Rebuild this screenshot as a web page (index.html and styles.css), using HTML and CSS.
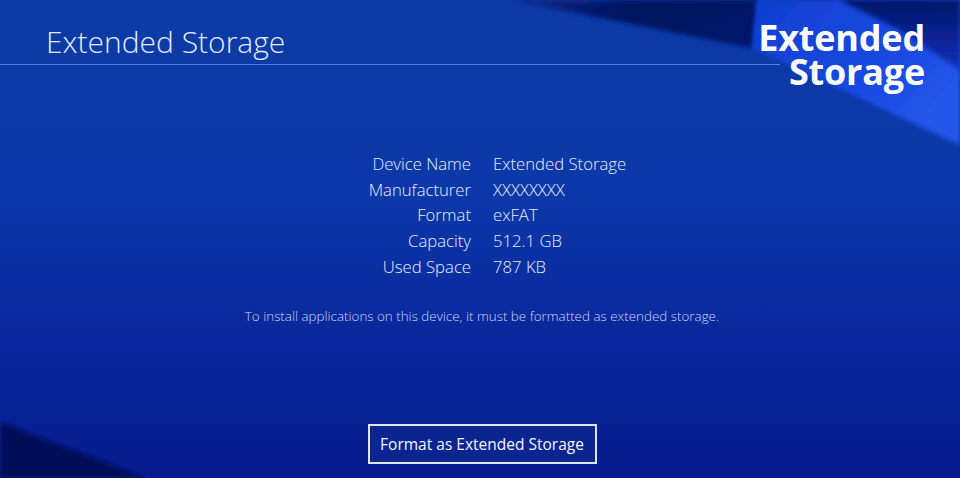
FILE: index.html
```html
<!DOCTYPE html>
<html lang="en">
<head>
    <meta charset="UTF-8">
    <meta name="viewport" content="width=device-width, initial-scale=1.0">
    <title>Extended Storage</title>
    <link rel="stylesheet" href="styles.css">
</head>
<body>
    <div class="screen">
        <!-- background waves -->
        <svg class="waves" width="960" height="478" viewBox="0 0 960 478" aria-hidden="true">
            <defs>
                <linearGradient id="darkBand" x1="0" y1="0" x2="1" y2="0.4">
                    <stop offset="0" stop-color="#0a2a8e"/>
                    <stop offset="0.5" stop-color="#04125e"/>
                    <stop offset="1" stop-color="#051468"/>
                </linearGradient>
                <linearGradient id="brightBand" x1="0" y1="0" x2="1" y2="0.6">
                    <stop offset="0" stop-color="#0f3fd0"/>
                    <stop offset="0.6" stop-color="#1848e0"/>
                    <stop offset="1" stop-color="#2455ea"/>
                </linearGradient>
                <linearGradient id="cornerDark" x1="0" y1="0" x2="0" y2="1">
                    <stop offset="0" stop-color="#03105a"/>
                    <stop offset="1" stop-color="#0b2cb4"/>
                </linearGradient>
                <filter id="soft"><feGaussianBlur stdDeviation="2"/></filter>
            </defs>
            <polygon points="512,0 760,0 752,48" fill="url(#darkBand)" filter="url(#soft)"/>
            <polygon points="756,0 960,0 960,145 752,48" fill="url(#brightBand)" filter="url(#soft)"/>
            <polygon points="840,0 960,0 960,70 900,30" fill="url(#cornerDark)" filter="url(#soft)" opacity="0.9"/>
            <polygon points="0,422 146,478 0,478" fill="#040d58" filter="url(#soft)"/>
        </svg>

        <header class="topbar">
            <h1 class="title">Extended Storage</h1>
        </header>

        <div class="badge">
            <div>Extended</div>
            <div>Storage</div>
        </div>

        <main class="content">
            <dl class="details">
                <dt>Device Name</dt>
                <dd>Extended Storage</dd>
                <dt>Manufacturer</dt>
                <dd>XXXXXXXX</dd>
                <dt>Format</dt>
                <dd>exFAT</dd>
                <dt>Capacity</dt>
                <dd>512.1 GB</dd>
                <dt>Used Space</dt>
                <dd>787 KB</dd>
            </dl>

            <p class="note">To install applications on this device, it must be formatted as extended storage.</p>

            <button class="format-btn">Format as Extended Storage</button>
        </main>
    </div>
</body>
</html>
```

FILE: styles.css
```css
body {
    margin: 0;
    font-family: 'Open Sans', 'Noto Sans', sans-serif;
    background-color: #0a2a9c;
}

.screen {
    position: relative;
    width: 960px;
    height: 478px;
    overflow: hidden;
    background: linear-gradient(180deg, #0c3aa6 0%, #0b38a8 40%, #08259a 75%, #061b8e 100%);
}

.waves {
    position: absolute;
    top: 0;
    left: 0;
}

.topbar {
    position: relative;
    width: 780px;
    height: 65px;
    border-bottom: 1px solid #5a80d4;
    box-sizing: border-box;
}

.title {
    margin: 0;
    padding: 22px 0 0 46px;
    font-size: 30px;
    font-weight: 300;
    line-height: 40px;
    color: #e4ecfa;
}

.badge {
    position: absolute;
    top: 21px;
    right: 35px;
    text-align: right;
    font-size: 36px;
    font-weight: 700;
    line-height: 34px;
    letter-spacing: -0.2px;
    color: #ffffff;
}

.content {
    position: relative;
    display: flex;
    flex-direction: column;
    align-items: center;
    padding-left: 4px;
}

.details {
    display: grid;
    grid-template-columns: 1fr 1fr;
    column-gap: 22px;
    width: 100%;
    margin: 86px 0 0 0;
    font-size: 16.7px;
    font-weight: 300;
    line-height: 25.7px;
    color: #e8eefa;
}

.details dt {
    text-align: right;
}

.details dd {
    margin: 0;
}

.note {
    margin: 27px 0 0 0;
    font-size: 13.4px;
    font-weight: 300;
    line-height: 18px;
    color: #cdd8f0;
}

.format-btn {
    margin-top: 99px;
    width: 229px;
    height: 40px;
    border: 2px solid #dde5f6;
    background-color: #0a2590;
    color: #f4f7ff;
    font-family: 'Open Sans', 'Noto Sans', sans-serif;
    font-size: 15.5px;
    font-weight: 500;
    cursor: pointer;
}
```
